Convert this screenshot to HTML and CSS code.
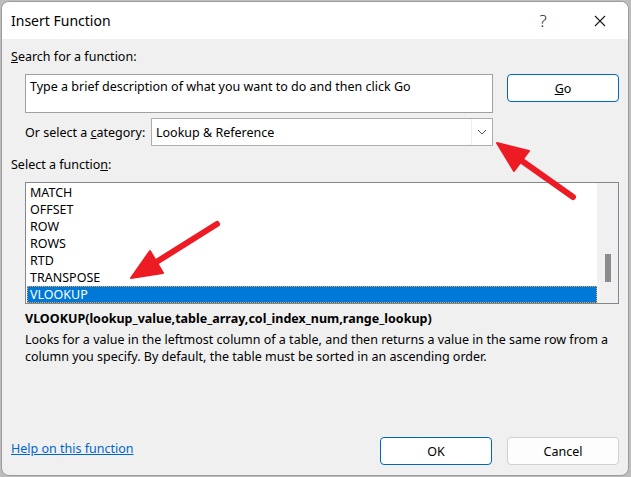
FILE: index.html
```html
<!DOCTYPE html>
<html lang="en">
<head>
<meta charset="UTF-8">
<title>Insert Function</title>
<link rel="stylesheet" href="styles.css">
</head>
<body>

<div class="dialog">
    <div class="titlebar">
        <span class="title">Insert Function</span>
        <span class="tb-btn help-btn">?</span>
        <span class="tb-btn close">
            <svg width="12" height="12" viewBox="0 0 12 12"><path d="M1 1 L11 11 M11 1 L1 11" stroke="#1a1a1a" stroke-width="1.1"/></svg>
        </span>
    </div>

    <div class="content">
        <div class="label"><u>S</u>earch for a function:</div>
        <div class="search-row">
            <div class="search-box">Type a brief description of what you want to do and then click Go</div>
            <div class="btn btn-default go"><u>G</u>o</div>
        </div>

        <div class="category-row">
            <span class="cat-label">Or select a <u>c</u>ategory:</span>
            <div class="select">
                <span class="select-text">Lookup &amp; Reference</span>
                <span class="select-arrow">
                    <svg width="10" height="6" viewBox="0 0 10 6"><path d="M1 1 L5 5 L9 1" stroke="#555" stroke-width="1" fill="none"/></svg>
                </span>
            </div>
        </div>

        <div class="label fn-label">Select a functio<u>n</u>:</div>
        <div class="fn-list">
            <ul class="fn-items">
                <li>MATCH</li>
                <li>OFFSET</li>
                <li>ROW</li>
                <li>ROWS</li>
                <li>RTD</li>
                <li>TRANSPOSE</li>
                <li class="selected">VLOOKUP</li>
            </ul>
            <div class="scrollbar"><div class="thumb"></div></div>
        </div>

        <div class="syntax">VLOOKUP(lookup_value,table_array,col_index_num,range_lookup)</div>
        <p class="desc">Looks for a value in the leftmost column of a table, and then returns a value in the same row from a column you specify. By default, the table must be sorted in an ascending order.</p>

        <div class="footer">
            <a class="help" href="#">Help on this function</a>
            <div class="btn btn-default ok">OK</div>
            <div class="btn cancel">Cancel</div>
        </div>
    </div>
</div>

<!-- annotation arrows drawn over the dialog -->
<svg class="arrows" width="631" height="477" viewBox="0 0 631 477">
    <g stroke="#ed1c24" stroke-width="6" stroke-linecap="round" fill="#ed1c24">
        <line x1="573" y1="197" x2="515" y2="156"/>
        <line x1="217" y1="224" x2="150" y2="266"/>
    </g>
    <g fill="#ed1c24" stroke="#ed1c24" stroke-width="2" stroke-linejoin="round">
        <polygon points="497,143 529,151 514,171"/>
        <polygon points="131,278 150,251 163,273"/>
    </g>
</svg>

</body>
</html>
```

FILE: styles.css
```css
body {
    margin: 0;
    background-color: #bdbdbd;
    font-family: "Noto Sans", "Open Sans", sans-serif;
    font-size: 12.5px;
    color: #000;
}
.dialog {
    box-sizing: border-box;
    width: 628px;
    height: 475px;
    margin: 1px 0 0 1px;
    border: 1px solid #9c9c9c;
    border-radius: 8px;
    background-color: #f0f0f0;
    overflow: hidden;
    display: flex;
    flex-direction: column;
}
.titlebar {
    height: 37px;
    background-color: #fff;
    display: flex;
    align-items: center;
    padding-left: 9px;
    padding-right: 5px;
}
.title {
    flex: 1;
    font-size: 14px;
}
.tb-btn {
    width: 46px;
    text-align: center;
    display: flex;
    justify-content: center;
    align-items: center;
}
.help-btn {
    font-size: 17px;
    font-weight: 300;
    color: #222;
    margin-right: 11px;
}
.content {
    flex: 1;
    display: flex;
    flex-direction: column;
    padding: 10px 9px 10px 9px;
}
.label {
    line-height: 16px;
}
.search-row {
    display: flex;
    margin-top: 9px;
    margin-left: 14px;
    align-items: flex-start;
}
.search-box {
    box-sizing: border-box;
    width: 468px;
    height: 39px;
    border: 1px solid #a0a0a0;
    background-color: #fff;
    padding: 4px 4px;
    line-height: 16px;
}
.btn {
    box-sizing: border-box;
    width: 112px;
    height: 28px;
    border: 1px solid #d0d0d0;
    border-radius: 4px;
    background-color: #fdfdfd;
    display: flex;
    justify-content: center;
    align-items: center;
}
.btn-default {
    border-color: #0067c0;
    background-color: #fff;
}
.go {
    margin-left: 14px;
}
.category-row {
    display: flex;
    align-items: center;
    margin-top: 5px;
    margin-left: 14px;
}
.cat-label {
    width: 126px;
}
.select {
    box-sizing: border-box;
    width: 342px;
    height: 28px;
    border: 1px solid #acacac;
    background-color: #fff;
    display: flex;
    align-items: center;
}
.select-text {
    flex: 1;
    padding-left: 4px;
}
.select-arrow {
    width: 20px;
    height: 26px;
    border-left: 1px solid #eeeeee;
    display: flex;
    align-items: center;
    justify-content: center;
}
.fn-label {
    margin-top: 11px;
}
.fn-list {
    box-sizing: border-box;
    width: 594px;
    height: 122px;
    margin-top: 9px;
    margin-left: 14px;
    border: 1px solid #828790;
    background-color: #fff;
    display: flex;
    overflow: hidden;
}
.fn-items {
    list-style: none;
    margin: 0;
    padding: 1px 0 0 1px;
    flex: 1;
}
.fn-items li {
    height: 17px;
    line-height: 17px;
    padding-left: 3px;
}
.fn-items li.selected {
    box-sizing: border-box;
    background-color: #0078d7;
    color: #fff;
    outline: 1px dotted #f7a233;
    outline-offset: -1px;
}
.scrollbar {
    width: 21px;
    background-color: #f0f0f0;
    position: relative;
}
.thumb {
    position: absolute;
    left: 8px;
    top: 71px;
    width: 6px;
    height: 28px;
    background-color: #8b8b8b;
}
.syntax {
    font-weight: bold;
    margin-top: 7px;
    margin-left: 14px;
    line-height: 16px;
}
.desc {
    margin: 4px 0 0 14px;
    line-height: 17px;
    width: 594px;
}
.footer {
    margin-top: auto;
    display: flex;
    align-items: center;
}
.help {
    flex: 1;
    color: #0066cc;
    text-decoration: underline;
    margin-top: -6px;
}
.ok {
    margin-right: 15px;
}
.arrows {
    position: absolute;
    left: 0;
    top: 0;
}
```
